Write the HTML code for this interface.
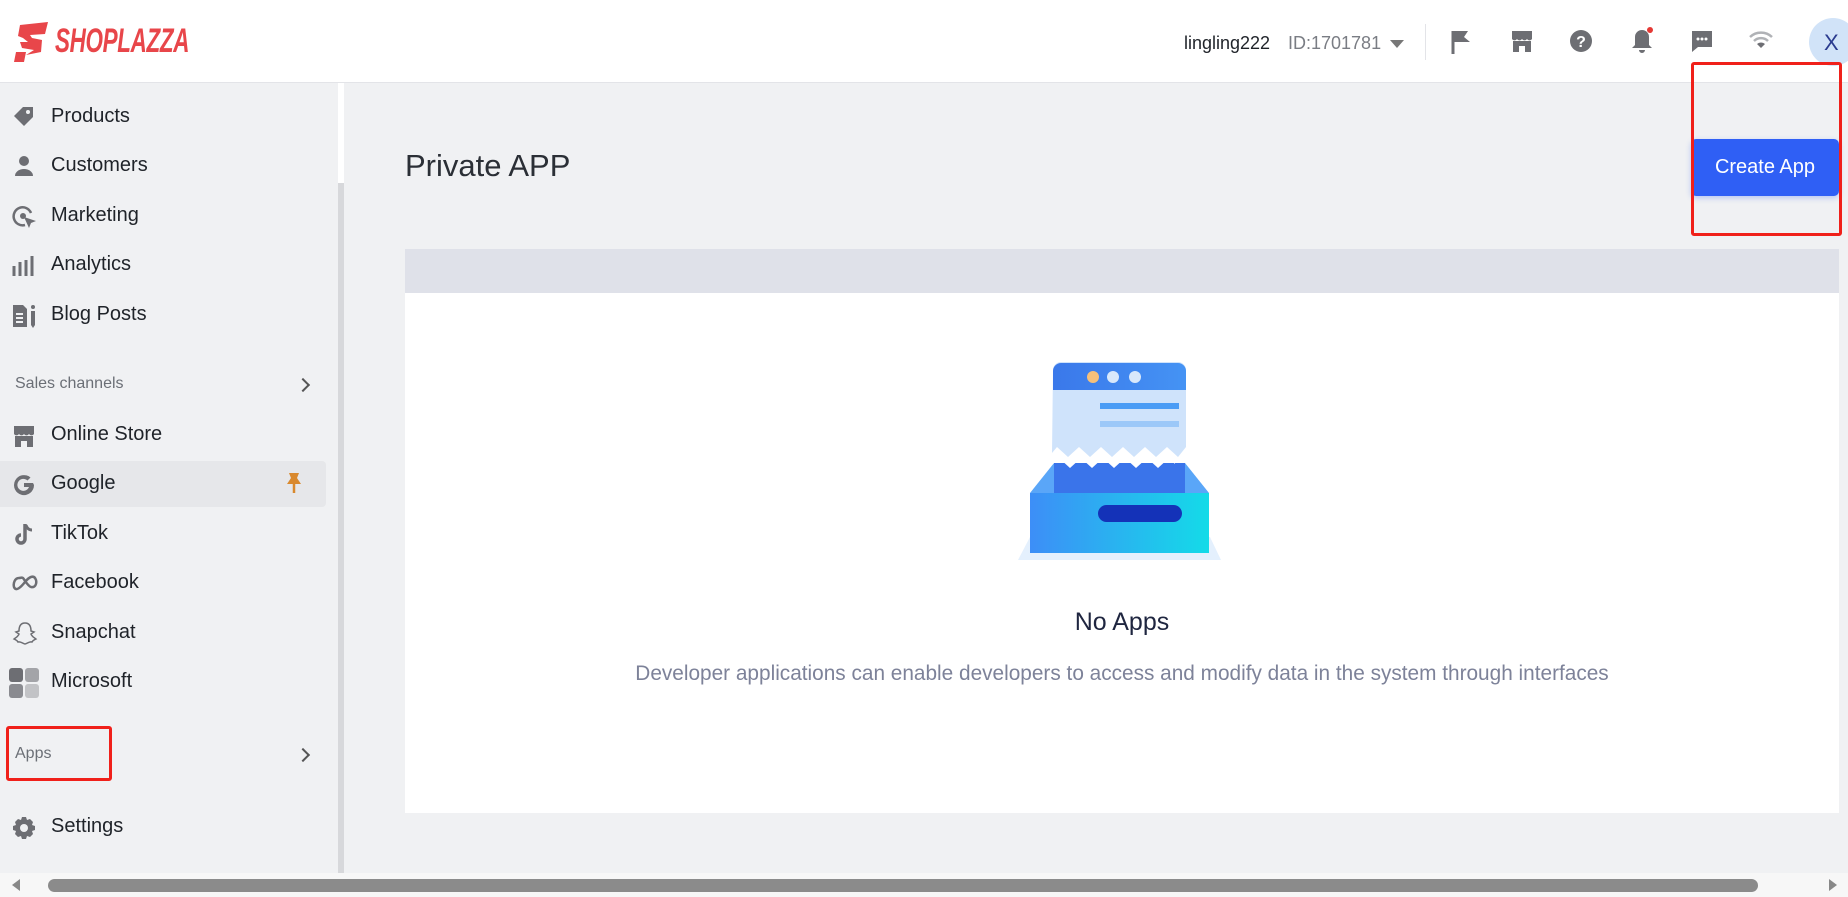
<!DOCTYPE html>
<html><head><meta charset="utf-8"><style>
*{margin:0;padding:0;box-sizing:border-box}
body{width:1848px;height:897px;overflow:hidden;background:#f0f1f3;font-family:"Liberation Sans",sans-serif;position:relative;color:#1f2329}
.hdr{position:absolute;left:0;top:0;width:1848px;height:83px;background:#fff;border-bottom:1px solid #e3e4e8}
.logo{position:absolute;left:55px;top:22px;font-size:34px;font-weight:bold;font-style:italic;color:#e8464a;transform:scaleX(0.66);transform-origin:left;letter-spacing:-0.5px}
.side{position:absolute;left:0;top:83px;width:338px;height:790px;background:#f0f1f3}
.item{position:absolute;left:0;width:326px;height:46px;font-size:20px;color:#1f2329}
.item span{position:absolute;left:51px;top:11px}
.item svg{position:absolute;left:12px;top:12px}
.sec{position:absolute;left:15px;font-size:16px;color:#6b6f76}
.chev{position:absolute;left:298px;width:10px;height:10px;border-right:2px solid #555;border-top:2px solid #555;transform:rotate(45deg)}
.vs{position:absolute;left:338px;top:83px;width:6px;height:790px;background:#d7d8db}
.vs:before{content:"";position:absolute;left:0;top:0;width:6px;height:100px;background:#fff}
.hs{position:absolute;left:0;top:873px;width:1848px;height:24px;background:#f7f7f7}
.thumb{position:absolute;left:48px;top:6px;width:1710px;height:13px;border-radius:7px;background:#8b8b8b}
.ic{position:absolute;top:29px}
</style></head><body>
<div class="hdr">
 <svg style="position:absolute;left:14px;top:22px" width="36" height="40" viewBox="0 0 36 40"><path d="M6 3 L34 0 L31 12 L16 13 L18 16 L28 18 L27 30 L12 33 L20 28 L8 26 L6 20 L14 20 L9 16 L4 14 Z M2 30 L12 30 L10 40 L0 40 Z" fill="#e8464a"/></svg>
 <div class="logo">SHOPLAZZA</div>
 <div style="position:absolute;left:1184px;top:33px;font-size:18px;color:#1f2329">lingling222</div>
 <div style="position:absolute;left:1288px;top:33px;font-size:18px;color:#7a7d84">ID:1701781</div>
 <div style="position:absolute;left:1390px;top:40px;border-left:7px solid transparent;border-right:7px solid transparent;border-top:8px solid #777"></div>
 <div style="position:absolute;left:1425px;top:24px;width:1px;height:36px;background:#e3e4e8"></div>
 <svg class="ic" style="left:1450px" width="22" height="26" viewBox="0 0 22 26"><path d="M3 2 L3 25" stroke="#6d6e73" stroke-width="3"/><path d="M3 2 L18 2 L14 8 L20 13 L3 13 Z" fill="#6d6e73"/></svg>
 <svg class="ic" style="left:1510px" width="24" height="24" viewBox="0 0 24 24"><path d="M2 2h20v8a3 3 0 0 1-5 0a3 3 0 0 1-5 0a3 3 0 0 1-5 0a3 3 0 0 1-5 0z M3 12h18v11h-6v-6h-6v6h-6z" fill="#6d6e73"/></svg>
 <svg class="ic" style="left:1569px" width="24" height="24" viewBox="0 0 24 24"><circle cx="12" cy="12" r="11" fill="#6d6e73"/><text x="12" y="18" font-size="16" font-weight="bold" text-anchor="middle" fill="#fff" font-family="Liberation Sans">?</text></svg>
 <svg class="ic" style="left:1630px;top:26px" width="24" height="28" viewBox="0 0 24 28"><path d="M12 4a7 7 0 0 0-7 7v8l-3 3h20l-3-3v-8a7 7 0 0 0-7-7z M9 24h6a3 3 0 0 1-6 0z" fill="#6d6e73"/><circle cx="20" cy="4" r="3" fill="#e53935"/></svg>
 <svg class="ic" style="left:1690px" width="24" height="24" viewBox="0 0 24 24"><path d="M2 2h20v16h-14l-6 5z" fill="#6d6e73"/><circle cx="8" cy="10" r="1.5" fill="#fff"/><circle cx="12" cy="10" r="1.5" fill="#fff"/><circle cx="16" cy="10" r="1.5" fill="#fff"/></svg>
 <svg class="ic" style="left:1748px;top:30px" width="26" height="20" viewBox="0 0 26 20"><path d="M2 7a16 16 0 0 1 22 0M6 11a10 10 0 0 1 14 0" stroke="#b0b2b6" stroke-width="2.5" fill="none"/><path d="M9 14a6 6 0 0 1 8 0l-4 4z" fill="#6d6e73"/></svg>
 <div style="position:absolute;left:1809px;top:18px;width:48px;height:48px;border-radius:50%;background:#d1e3f8;color:#2a3b8f;font-size:22px;text-align:left;padding:12px 0 0 15px">X</div>
</div>

<div class="side">
 <div class="item" style="top:11px"><svg width="24" height="22" viewBox="0 0 24 22"><path d="M2 10 L11 1 L21 1 L21 11 L12 20 Z" fill="#6d6e73"/><circle cx="16" cy="6" r="2" fill="#f0f1f3"/></svg><span>Products</span></div>
 <div class="item" style="top:60px"><svg width="24" height="22" viewBox="0 0 24 22"><circle cx="12" cy="6" r="5" fill="#6d6e73"/><path d="M3 21 a9 7 0 0 1 18 0z" fill="#6d6e73"/></svg><span>Customers</span></div>
 <div class="item" style="top:110px"><svg width="26" height="24" viewBox="0 0 26 24"><path d="M19 8a9 9 0 1 0-6 12" stroke="#6d6e73" stroke-width="2.5" fill="none"/><circle cx="11" cy="11" r="3" fill="#6d6e73"/><path d="M12 12 L24 16 L19 18 L17 23 Z" fill="#6d6e73"/></svg><span>Marketing</span></div>
 <div class="item" style="top:159px"><svg width="24" height="24" viewBox="0 0 24 24"><path d="M2 12v10M8 8v14M14 6v16M20 2v20" stroke="#6d6e73" stroke-width="3"/></svg><span>Analytics</span></div>
 <div class="item" style="top:209px"><svg width="24" height="24" viewBox="0 0 24 24"><path d="M1 1h10l4 4v18h-14z" fill="#6d6e73"/><path d="M4 10h7M4 14h7M4 18h7" stroke="#f0f1f3" stroke-width="2"/><circle cx="21" cy="3" r="2" fill="#6d6e73"/><path d="M19 7h4v14l-2 3-2-3z" fill="#6d6e73"/></svg><span>Blog Posts</span></div>
 <div class="sec" style="top:292px">Sales channels</div><div class="chev" style="top:297px"></div>
 <div class="item" style="top:329px"><svg width="24" height="24" viewBox="0 0 24 24"><path d="M2 2h20v8a3 3 0 0 1-5 0a3 3 0 0 1-5 0a3 3 0 0 1-5 0a3 3 0 0 1-5 0z M3 12h18v11h-6v-6h-6v6h-6z" fill="#6d6e73"/></svg><span>Online Store</span></div>
 <div class="item" style="top:378px;background:#e6e7ea;border-radius:0 4px 4px 0"><svg width="24" height="24" viewBox="0 0 24 24"><path d="M21 10H12v4h5a6 6 0 1 1-1.5-6.5l3-3A10 10 0 1 0 22 12z" fill="#6d6e73"/></svg><span>Google</span><svg style="left:286px;top:11px" width="16" height="22" viewBox="0 0 16 22"><path d="M3 1h10l-2 5 4 6h-14l4-6z" fill="#d9892e"/><path d="M8 12v9" stroke="#d9892e" stroke-width="2.5"/></svg></div>
 <div class="item" style="top:428px"><svg width="24" height="24" viewBox="0 0 24 24"><path d="M13 1v15a4 4 0 1 1-4-4" stroke="#6d6e73" stroke-width="3.5" fill="none"/><path d="M14 2a6 6 0 0 0 6 5" stroke="#6d6e73" stroke-width="3" fill="none"/></svg><span>TikTok</span></div>
 <div class="item" style="top:477px"><svg width="26" height="24" viewBox="0 0 26 24"><path d="M7 6c-4 0-6 5-5 9 2 5 7 0 11-5 4-5 9-8 11-2 1 4-1 8-5 7-3-1-5-5-8-9-1-1-2-0-4 0z" stroke="#6d6e73" stroke-width="2.5" fill="none"/></svg><span>Facebook</span></div>
 <div class="item" style="top:527px"><svg width="26" height="24" viewBox="0 0 26 24"><path d="M13 1c-5 0-6 4-6 8l-3 1 3 2c-1 3-4 4-5 5 2 1 3 1 4 3 3-1 5 2 7 2s4-3 7-2c1-2 2-2 4-3-1-1-4-2-5-5l3-2-3-1c0-4-1-8-6-8z" stroke="#6d6e73" stroke-width="1.5" fill="none"/></svg><span>Snapchat</span></div>
 <div class="item" style="top:576px"><svg style="left:9px;top:9px" width="30" height="30" viewBox="0 0 30 30"><rect x="0" y="0" width="14" height="14" rx="3" fill="#6d6e73"/><rect x="16" y="0" width="14" height="14" rx="3" fill="#a3a4a8"/><rect x="0" y="16" width="14" height="14" rx="3" fill="#8a8b90"/><rect x="16" y="16" width="14" height="14" rx="3" fill="#c2c3c6"/></svg><span>Microsoft</span></div>
 <div class="sec" style="top:662px">Apps</div><div class="chev" style="top:667px"></div>
 <div style="position:absolute;left:6px;top:643px;width:106px;height:55px;border:3px solid #f0201a;border-radius:3px"></div>
 <div class="item" style="top:721px"><svg width="24" height="24" viewBox="0 0 24 24"><path d="M10 1h4l1 3 3-1 3 3-1 3 3 1v4l-3 1 1 3-3 3-3-1-1 3h-4l-1-3-3 1-3-3 1-3-3-1v-4l3-1-1-3 3-3 3 1z" fill="#6d6e73"/><circle cx="12" cy="12" r="4" fill="#f0f1f3"/></svg><span>Settings</span></div>
</div>
<div class="vs"></div>

<div style="position:absolute;left:405px;top:148px;font-size:31px;color:#2b2f36">Private APP</div>
<div style="position:absolute;left:1691px;top:139px;width:148px;height:57px;background:#2f5ff5;border-radius:5px;color:#fff;font-size:20px;text-align:center;line-height:57px;box-shadow:0 2px 6px rgba(47,95,245,.3)">Create App</div>
<div style="position:absolute;left:1691px;top:62px;width:151px;height:174px;border:3px solid #f0201a;border-radius:3px"></div>

<div style="position:absolute;left:405px;top:249px;width:1434px;height:44px;background:#dfe1e9"></div>
<div style="position:absolute;left:405px;top:293px;width:1434px;height:520px;background:#fff"></div>
<svg style="position:absolute;left:1018px;top:362px" width="204" height="198" viewBox="0 0 204 198">
 <defs><linearGradient id="g" x1="0" x2="1"><stop offset="0" stop-color="#3d8ef7"/><stop offset="1" stop-color="#14dbe8"/></linearGradient>
 <linearGradient id="h" x1="0" x2="1"><stop offset="0" stop-color="#3a78ea"/><stop offset="1" stop-color="#4593f4"/></linearGradient></defs>
 <path d="M12 175 L192 175 L203 198 L0 198 Z" fill="#e4f0fd"/>
 <path d="M12 131 L36 101 L167 101 L191 131 Z" fill="#5aa6f8"/>
 <rect x="36" y="101" width="131" height="30" fill="#3a74ea"/>
 <path d="M35 8 a8 8 0 0 1 8-8 h117 a8 8 0 0 1 8 8 v77 l-8 10-11-10-11 10-11-10-11 10-11-10-11 10-11-10-11 10-11-10-11 10-11-10-5 6 z" fill="#cfe3fb"/>
 <path d="M35 96 l6-6 11 10 11-10 11 10 11-10 11 10 11-10 11 10 11-10 11 10 11-10 6 6 v6 l-6-6-11 10-11-10-11 10-11-10-11 10-11-10-11 10-11-10-11 10-11-10-6 6z" fill="#fff"/>
 <path d="M43 1 h117 a8 8 0 0 1 8 8 v19 h-133 v-19 a8 8 0 0 1 8-8z" fill="url(#h)"/>
 <circle cx="75" cy="15" r="6" fill="#f6c07a"/><circle cx="95" cy="15" r="6" fill="#d8e8fb"/><circle cx="117" cy="15" r="6" fill="#d8e8fb"/>
 <rect x="82" y="41" width="79" height="6" fill="#4a9cf5"/><rect x="82" y="59" width="79" height="6" fill="#9cc8f8"/>
 <rect x="12" y="131" width="179" height="60" fill="url(#g)"/>
 <rect x="80" y="143" width="84" height="17" rx="8.5" fill="#1432b8"/>
</svg>
<div style="position:absolute;left:405px;width:1434px;top:608px;text-align:center;font-size:25px;color:#1f2640">No Apps</div>
<div style="position:absolute;left:405px;width:1434px;top:662px;text-align:center;font-size:20.8px;color:#7d8299">Developer applications can enable developers to access and modify data in the system through interfaces</div>

<div class="hs"><div class="thumb"></div>
 <div style="position:absolute;left:12px;top:6px;border-top:6px solid transparent;border-bottom:6px solid transparent;border-right:8px solid #888"></div>
 <div style="position:absolute;left:1829px;top:6px;border-top:6px solid transparent;border-bottom:6px solid transparent;border-left:8px solid #888"></div>
</div>
</body></html>
